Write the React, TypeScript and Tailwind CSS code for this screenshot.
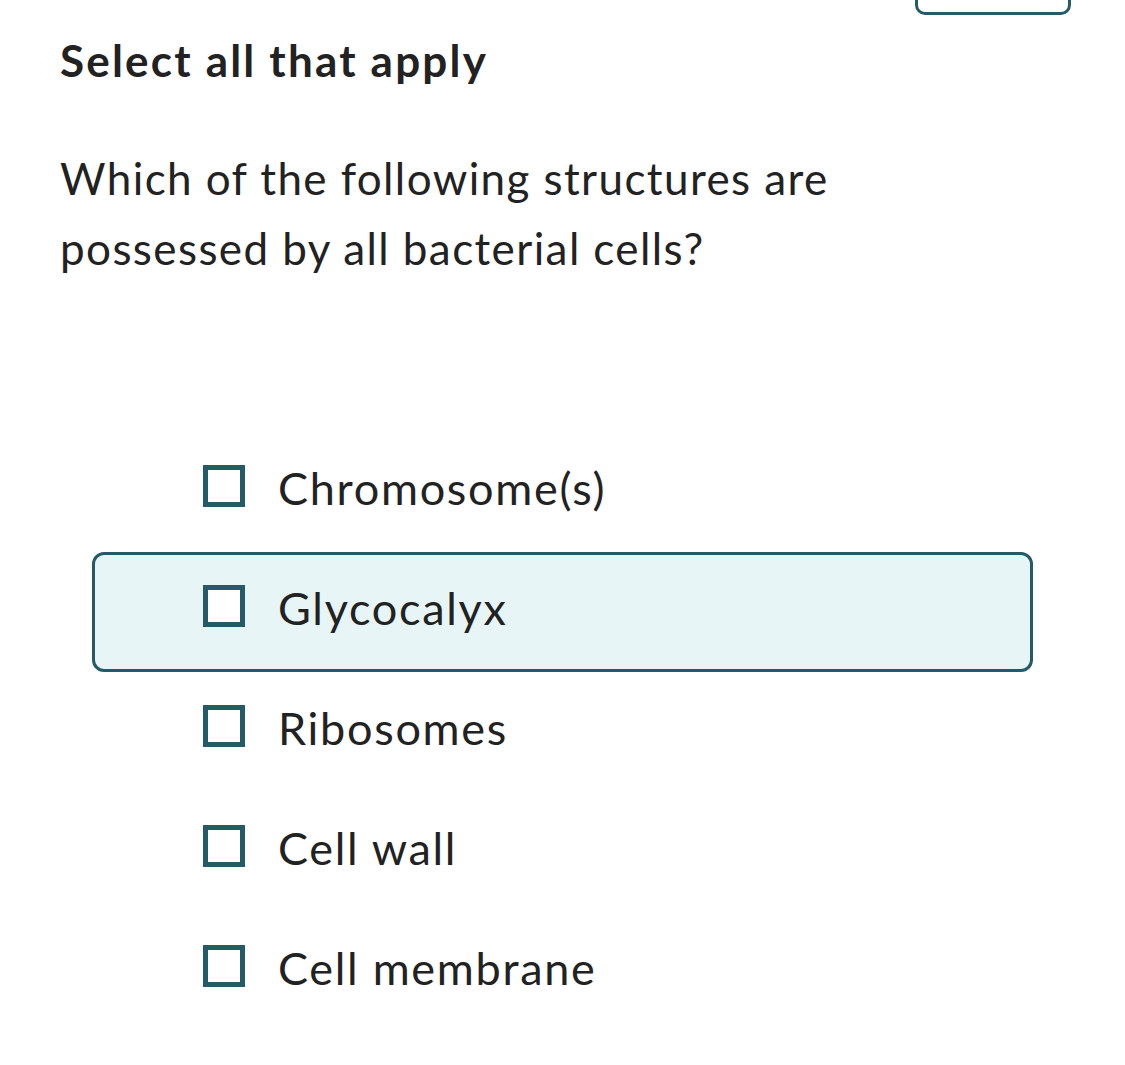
const options = ['Chromosome(s)', 'Glycocalyx', 'Ribosomes', 'Cell wall', 'Cell membrane'];

function Box() {
  return <span className="block h-[42px] w-[42px] shrink-0 border-[5px] border-[#255a69] bg-white" />;
}

export default function App() {
  return (
    <div className="relative min-h-[1065px] w-[1125px] bg-white font-['Lato',sans-serif] text-[#222222]">
      <div className="flex justify-end pr-[54px]">
        <div className="-mt-[40px] h-[55px] w-[156px] rounded-[10px] border-[3px] border-[#255a69]" />
      </div>
      <div className="px-[60px]">
        <h2 className="mt-[20px] text-[44px] font-bold leading-[50px] tracking-[2.2px]">Select all that apply</h2>
        <p className="mt-[58px] w-[820px] text-[44px] leading-[70px] tracking-[1.4px]">
          Which of the following structures are possessed by all bacterial cells?
        </p>
      </div>
      <ul className="mx-[92px] mt-[149px] flex flex-col">
        {options.map((o, i) => (
          <li
            key={o}
            className={
              i === 1
                ? 'flex h-[120px] items-start gap-[33px] rounded-[12px] border-[3px] border-[#255a69] bg-[#e7f5f6] pl-[108px] pt-[30px]'
                : 'flex h-[120px] items-start gap-[33px] border-[3px] border-transparent pl-[108px] pt-[30px]'
            }
          >
            <Box />
            <span className="-mt-[2px] text-[45px] leading-[50px] tracking-[1.7px]">{o}</span>
          </li>
        ))}
      </ul>
    </div>
  );
}
